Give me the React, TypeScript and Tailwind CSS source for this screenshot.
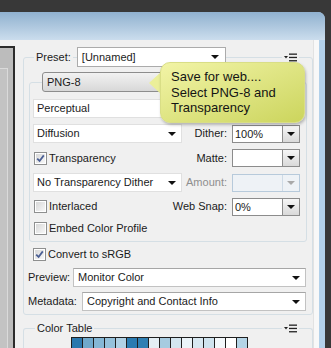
import React from 'react';

const Arrow = ({ color = '#111' }: { color?: string }) => (
  <svg width="8" height="4" viewBox="0 0 8 4">
    <path d="M0 0h8L4 4z" fill={color} />
  </svg>
);

const MenuIcon = () => (
  <svg width="13" height="9" viewBox="0 0 13 9">
    <path d="M0 3h4L2 5.5z" fill="#222" />
    <rect x="5" y="0.5" width="8" height="1.3" fill="#222" />
    <rect x="5" y="3.8" width="8" height="1.3" fill="#222" />
    <rect x="5" y="7.1" width="8" height="1.3" fill="#222" />
  </svg>
);

const Check = ({ checked }: { checked?: boolean }) => (
  <div className="w-[13px] h-[13px] shrink-0 border border-[#8e8f8f] p-px bg-white">
    <div className="w-full h-full flex items-center justify-center bg-gradient-to-br from-[#d8d8d8] to-[#f7f7f7]">
      {checked && (
        <svg width="9" height="9" viewBox="0 0 9 9">
          <path d="M1.2 4.6 L3.6 7 L7.8 1.4" stroke="#4b5f94" strokeWidth="1.8" fill="none" />
        </svg>
      )}
    </div>
  </div>
);

const Combo = ({ text, className = '' }: { text: string; className?: string }) => (
  <div className={`flex items-center justify-between bg-white border pl-[3px] pr-[5px] whitespace-nowrap ${className}`}>
    <span>{text}</span>
    <Arrow />
  </div>
);

const BtnCombo = ({ text = '', disabled }: { text?: string; disabled?: boolean }) => (
  <div
    className={`flex shrink-0 w-[68px] h-[18px] border ${
      disabled ? 'border-[#b7cadb] bg-[#eef2f6]' : 'border-[#8c8c8c] bg-white'
    }`}
  >
    <span className="flex-1 pl-[2px] leading-[16px]">{text}</span>
    <div
      className={`w-[17px] flex items-center justify-center border-l ${
        disabled ? 'border-[#cfdbe6] bg-[#eef2f6]' : 'border-[#8c8c8c] bg-gradient-to-b from-[#f6f6f6] to-[#d9d9d9]'
      }`}
    >
      <Arrow color={disabled ? '#a9a9a9' : '#111'} />
    </div>
  </div>
);

const swatches = [
  '#2b78ae', '#6fa9cc', '#85b7d5', '#95c1db', '#b0d1e5', '#2a7bb1', '#2f7fb3', '#e4eef4',
  '#a6cbe0', '#d3e5ef', '#eaf3f8', '#d8e8f1', '#cfe3ee', '#f3f8fb', '#ffffff', '#b4d4e6',
];

export default function App() {
  return (
    <div className="relative w-[331px] h-[348px] overflow-hidden bg-[#383838] pt-[12px] pr-[6px] font-['Liberation_Sans',Arial,sans-serif] text-[11px] text-[#1b1b1b]">
      <div className="h-full flex flex-col rounded-tr-[7px] overflow-hidden bg-[#b3d1ea]">
        {/* window title band */}
        <div className="h-[28px] shrink-0 bg-gradient-to-b from-[#90b1cf] to-[#cbdded]" />
        <div className="flex flex-1">
          <div className="flex-1 flex bg-[#f0f0f0]">
            {/* preview pane edge */}
            <div className="w-[15px] mt-[6px] border-t-2 border-r-2 border-[#2b2b2b] bg-[#bcbcbc]">
              <div className="w-[8px] h-full mt-[20px] border-t border-r border-[#dadada] bg-[#c3c3c3]" />
            </div>

            <div className="w-[290px] ml-[8px] pt-[17px] flex flex-col">
              {/* settings group */}
              <div className="border border-[#d5dfe5] rounded-[3px] flex flex-col">
                <div className="flex items-center h-[20px] -mt-[11px] pl-[10px] pr-[13px]">
                  <span className="bg-[#f0f0f0] px-[2px]">Preset:</span>
                  <Combo text="[Unnamed]" className="ml-[4px] w-[149px] h-[20px] border-[#ababab] pl-[4px] pr-[6px]" />
                  <div className="flex-1" />
                  <div className="bg-[#f0f0f0] px-[2px] flex items-center h-[12px]">
                    <MenuIcon />
                  </div>
                </div>

                {/* format group */}
                <div className="mx-[5px] mt-[15px] border border-[#d5dfe5] rounded-[3px] flex flex-col pb-[2px]">
                  <div className="flex -mt-[11px] h-[20px] pl-[12px]">
                    <div className="w-[158px] h-[20px] flex items-center pl-[4px] rounded-[3px] border border-[#8d8d8d] bg-gradient-to-b from-[#f2f2f2] to-[#d8d8d8]">
                      PNG-8
                    </div>
                  </div>

                  <div className="flex items-center h-[25px] mt-[4px] pl-[3px] pr-[6px]">
                    <Combo text="Perceptual" className="w-[149px] h-[19px] border-[#e0e0e0]" />
                  </div>

                  <div className="flex items-center h-[25px] pl-[3px] pr-[6px]">
                    <Combo text="Diffusion" className="w-[149px] h-[19px] border-[#e0e0e0]" />
                    <div className="flex-1 flex items-center justify-end gap-[5px] whitespace-nowrap">
                      <span>Dither:</span>
                      <BtnCombo text="100%" />
                    </div>
                  </div>

                  <div className="flex items-center h-[24px] pl-[4px] pr-[6px]">
                    <div className="w-[148px] flex items-center gap-[2px]">
                      <Check checked />
                      <span>Transparency</span>
                    </div>
                    <div className="flex-1 flex items-center justify-end gap-[5px] whitespace-nowrap">
                      <span>Matte:</span>
                      <BtnCombo />
                    </div>
                  </div>

                  <div className="flex items-center h-[25px] pl-[3px] pr-[6px]">
                    <Combo text="No Transparency Dither" className="w-[149px] h-[19px] border-[#e0e0e0]" />
                    <div className="flex-1 flex items-center justify-end gap-[5px] whitespace-nowrap">
                      <span className="text-[#8e8e8e]">Amount:</span>
                      <BtnCombo disabled />
                    </div>
                  </div>

                  <div className="flex items-center h-[23px] pl-[4px] pr-[6px]">
                    <div className="w-[148px] flex items-center gap-[2px]">
                      <Check />
                      <span>Interlaced</span>
                    </div>
                    <div className="flex-1 flex items-center justify-end gap-[5px] whitespace-nowrap">
                      <span>Web Snap:</span>
                      <BtnCombo text="0%" />
                    </div>
                  </div>

                  <div className="flex items-center h-[21px] pl-[4px] gap-[2px]">
                    <Check />
                    <span>Embed Color Profile</span>
                  </div>
                </div>

                <div className="flex items-center h-[24px] pl-[9px] gap-[2px]">
                  <Check checked />
                  <span>Convert to sRGB</span>
                </div>

                <div className="flex items-center h-[23px] pl-[4px] pr-[6px]">
                  <span className="w-[45px]">Preview:</span>
                  <Combo text="Monitor Color" className="flex-1 h-[19px] border-[#c2c2c2] border-t-[#a6a6a6] pl-[4px]" />
                </div>

                <div className="flex items-center h-[25px] pl-[4px] pr-[6px]">
                  <span className="w-[54px]">Metadata:</span>
                  <Combo
                    text="Copyright and Contact Info"
                    className="flex-1 h-[19px] border-[#c2c2c2] border-t-[#a6a6a6] pl-[4px]"
                  />
                </div>
              </div>

              {/* color table group */}
              <div className="mt-[13px] flex-1 border-x border-t border-[#d5dfe5] rounded-t-[3px] flex flex-col">
                <div className="flex items-center h-[13px] -mt-[7px] pl-[11px] pr-[13px]">
                  <span className="bg-[#f0f0f0] px-[2px]">Color Table</span>
                  <div className="flex-1" />
                  <div className="bg-[#f0f0f0] px-[2px] flex items-center">
                    <MenuIcon />
                  </div>
                </div>
                <div className="flex mt-[2px] pl-[47px]">
                  {swatches.map((c, i) => (
                    <div key={i} className="w-[12px] h-[14px] border border-[#1f1f1f] -ml-px first:ml-0" style={{ background: c }} />
                  ))}
                </div>
              </div>
            </div>

            <div className="ml-auto w-[6px] border-l border-[#e2e2e2] bg-[#f8f8f8]" />
          </div>
          <div className="w-[6px] shrink-0 bg-[#b3d1ea]" />
        </div>
      </div>

      {/* callout */}
      <div className="absolute left-[149px] top-[62px] flex">
        <svg width="12" height="22" viewBox="0 0 12 22" className="mt-[10px] -mr-px">
          <path d="M12 0 L0 11 L12 22 Z" fill="#ebef99" />
        </svg>
        <div className="w-[145px] h-[61px] rounded-[10px] border border-[#d9de86] bg-gradient-to-br from-[#f2f4a6] to-[#ccd55c] pl-[10px] pt-[6px] text-[13px] leading-[15.5px] text-[#141414] shadow-[1px_2px_3px_rgba(0,0,0,0.25)]">
          <div>Save for web....</div>
          <div>Select PNG-8 and</div>
          <div>Transparency</div>
        </div>
      </div>
    </div>
  );
}
